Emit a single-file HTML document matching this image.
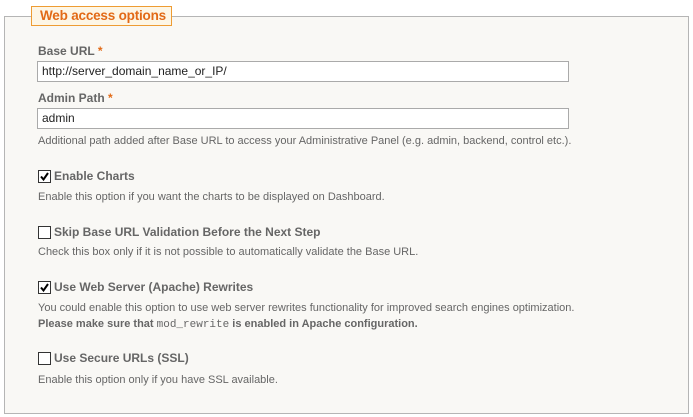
<!DOCTYPE html>
<html><head><style>
body{margin:0;background:#fff;font-family:"Liberation Sans",Arial,sans-serif;color:#666;width:693px;height:417px;position:relative;overflow:hidden}
.fs{position:absolute;left:4px;top:16px;width:683px;height:396px;border:1px solid #b5b5b5;background:#f9f8f5}
.lg{position:absolute;left:31px;top:6px;border:1px solid #ee9c33;background:#fdf6e6;color:#e26a17;font-weight:bold;font-size:13.5px;letter-spacing:-0.2px;line-height:18px;padding-left:8px;box-sizing:border-box;width:141px;height:20px;white-space:nowrap;overflow:hidden}
.t{position:absolute;left:38px;white-space:nowrap}
.lb{font-size:12px;font-weight:bold;color:#666}
.lb b{color:#e26a17}
.d{font-size:11px;color:#666}
.in{position:absolute;left:37px;width:530px;height:19px;border:1px solid #aaa;background:#fff;font-size:12px;color:#222;line-height:19px;text-indent:4px}
.cb{position:absolute;left:38px;width:11px;height:11px;border:1px solid #333;background:#fff}
.cb svg{display:block}
code{font-family:"Liberation Mono",monospace;font-weight:normal;font-size:11px}
</style></head><body>
<div class="fs"></div>
<div class="lg">Web access options</div>
<div class="t lb" style="top:44px">Base URL <b>*</b></div>
<div class="in" style="top:61px">http://server_domain_name_or_IP/</div>
<div class="t lb" style="top:91px">Admin Path <b>*</b></div>
<div class="in" style="top:108px">admin</div>
<div class="t d" style="top:135px">Additional path added after Base URL to access your Administrative Panel (e.g. admin, backend, control etc.).</div>
<div class="cb" style="top:170px"><svg width="11" height="11"><path d="M2 5.5L4.5 8.5L9 2" stroke="#000" stroke-width="2" fill="none"/></svg></div><div class="t lb" style="top:169px;left:54px">Enable Charts</div>
<div class="t d" style="top:191px">Enable this option if you want the charts to be displayed on Dashboard.</div>
<div class="cb" style="top:226px"></div><div class="t lb" style="top:225px;left:54px">Skip Base URL Validation Before the Next Step</div>
<div class="t d" style="top:246px">Check this box only if it is not possible to automatically validate the Base URL.</div>
<div class="cb" style="top:281px"><svg width="11" height="11"><path d="M2 5.5L4.5 8.5L9 2" stroke="#000" stroke-width="2" fill="none"/></svg></div><div class="t lb" style="top:280px;left:54px">Use Web Server (Apache) Rewrites</div>
<div class="t d" style="top:302px">You could enable this option to use web server rewrites functionality for improved search engines optimization.</div>
<div class="t d" style="top:318px;font-weight:bold">Please make sure that <code>mod_rewrite</code> is enabled in Apache configuration.</div>
<div class="cb" style="top:352px"></div><div class="t lb" style="top:351px;left:54px">Use Secure URLs (SSL)</div>
<div class="t d" style="top:374px">Enable this option only if you have SSL available.</div>
</body></html>
